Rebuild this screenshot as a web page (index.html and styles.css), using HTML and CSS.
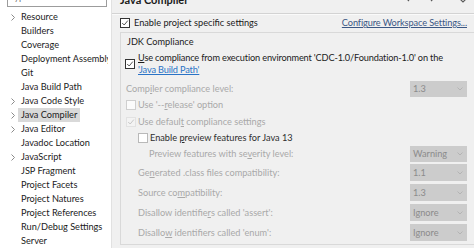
FILE: index.html
```html
<!DOCTYPE html>
<html lang="en">
<head>
<meta charset="utf-8">
<title>Properties - Java Compiler</title>
<link rel="stylesheet" href="styles.css">
</head>
<body>
<div class="window">
  <aside class="nav">
    <div class="filter">type filter text</div>
    <ul class="tree">
      <li class="node"><span class="twisty"><svg viewBox="0 0 4 7" width="4" height="7"><path d="M0.5 0.5 L3.5 3.5 L0.5 6.5" fill="none" stroke="#8a8a8a" stroke-width="1"/></svg></span><span class="label">Resource</span></li>
      <li class="node"><span class="twisty"></span><span class="label">Builders</span></li>
      <li class="node"><span class="twisty"></span><span class="label">Coverage</span></li>
      <li class="node"><span class="twisty"></span><span class="label">Deployment Assembly</span></li>
      <li class="node"><span class="twisty"></span><span class="label">Git</span></li>
      <li class="node"><span class="twisty"></span><span class="label">Java Build Path</span></li>
      <li class="node"><span class="twisty"><svg viewBox="0 0 4 7" width="4" height="7"><path d="M0.5 0.5 L3.5 3.5 L0.5 6.5" fill="none" stroke="#8a8a8a" stroke-width="1"/></svg></span><span class="label">Java Code Style</span></li>
      <li class="node selected"><span class="twisty"><svg viewBox="0 0 4 7" width="4" height="7"><path d="M0.5 0.5 L3.5 3.5 L0.5 6.5" fill="none" stroke="#8a8a8a" stroke-width="1"/></svg></span><span class="label">Java Compiler</span></li>
      <li class="node"><span class="twisty"><svg viewBox="0 0 4 7" width="4" height="7"><path d="M0.5 0.5 L3.5 3.5 L0.5 6.5" fill="none" stroke="#8a8a8a" stroke-width="1"/></svg></span><span class="label">Java Editor</span></li>
      <li class="node"><span class="twisty"></span><span class="label">Javadoc Location</span></li>
      <li class="node"><span class="twisty"><svg viewBox="0 0 4 7" width="4" height="7"><path d="M0.5 0.5 L3.5 3.5 L0.5 6.5" fill="none" stroke="#8a8a8a" stroke-width="1"/></svg></span><span class="label">JavaScript</span></li>
      <li class="node"><span class="twisty"></span><span class="label">JSP Fragment</span></li>
      <li class="node"><span class="twisty"></span><span class="label">Project Facets</span></li>
      <li class="node"><span class="twisty"></span><span class="label">Project Natures</span></li>
      <li class="node"><span class="twisty"></span><span class="label">Project References</span></li>
      <li class="node"><span class="twisty"></span><span class="label">Run/Debug Settings</span></li>
      <li class="node"><span class="twisty"></span><span class="label">Server</span></li>
    </ul>
  </aside>

  <main class="page">
    <header class="page-head">
      <h1 class="page-title">Java Compiler</h1>
      <div class="toolbar">
        <svg class="tb-back" viewBox="0 0 10 10" width="10" height="10"><path d="M9 5 H2 M5 2 L2 5 L5 8" fill="none" stroke="#5a5a5a" stroke-width="1.2"/></svg>
        <svg class="tb-fwd" viewBox="0 0 10 10" width="10" height="10"><path d="M1 5 H8 M5 2 L8 5 L5 8" fill="none" stroke="#5a5a5a" stroke-width="1.2"/></svg>
        <svg class="tb-menu" viewBox="0 0 8 10" width="8" height="10"><path d="M1 6 L4 9 L7 6" fill="none" stroke="#5a5a5a" stroke-width="1.2"/></svg>
      </div>
    </header>

    <div class="enable-row">
      <span class="cb cb-on"><svg viewBox="0 0 10 10" width="8" height="8"><path d="M1.5 5 L4 7.5 L8.5 2" fill="none" stroke="#2b2b2b" stroke-width="1"/></svg></span>
      <span class="enable-label">Enable pro<u>j</u>ect specific settings</span>
      <a class="ws-link" href="#">Configure Workspace Settings...</a>
    </div>

    <section class="group">
      <div class="group-title">JDK Compliance</div>

      <div class="row env-row">
        <span class="cb cb-on"><svg viewBox="0 0 10 10" width="8" height="8"><path d="M1.5 5 L4 7.5 L8.5 2" fill="none" stroke="#2b2b2b" stroke-width="1"/></svg></span>
        <p class="env-text"><u>U</u>se compliance from execution environment 'CDC-1.0/Foundation-1.0' on the<br><a class="path-link" href="#">'Java Build Path'</a></p>
      </div>

      <div class="row level-row">
        <span class="dim">Comp<u>i</u>ler compliance level:</span>
        <span class="combo">1.3<svg viewBox="0 0 6 4" width="6" height="4"><path d="M0.5 0.5 L3 3 L5.5 0.5" fill="none" stroke="#b4b4b4" stroke-width="1"/></svg></span>
      </div>

      <div class="row release-row">
        <span class="cb cb-off-dim"></span>
        <span class="dim cb-text">Use '--<u>r</u>elease' option</span>
      </div>

      <div class="row default-row">
        <span class="cb cb-on-dim"><svg viewBox="0 0 10 10" width="8" height="8"><path d="M1.5 5 L4 7.5 L8.5 2" fill="none" stroke="#bdbdbd" stroke-width="1"/></svg></span>
        <span class="dim cb-text">Use defaul<u>t</u> compliance settings</span>
      </div>

      <div class="row preview-row">
        <span class="cb cb-off"></span>
        <span class="cb-text preview-text">Enable <u>p</u>review features for Java 13</span>
      </div>

      <div class="row severity-row">
        <span class="dim">Preview features with se<u>v</u>erity level:</span>
        <span class="combo">Warning<svg viewBox="0 0 6 4" width="6" height="4"><path d="M0.5 0.5 L3 3 L5.5 0.5" fill="none" stroke="#b4b4b4" stroke-width="1"/></svg></span>
      </div>

      <div class="row opt-row first-opt">
        <span class="dim">Ge<u>n</u>erated .class files compatibility:</span>
        <span class="combo">1.1<svg viewBox="0 0 6 4" width="6" height="4"><path d="M0.5 0.5 L3 3 L5.5 0.5" fill="none" stroke="#b4b4b4" stroke-width="1"/></svg></span>
      </div>

      <div class="row opt-row">
        <span class="dim">Source co<u>m</u>patibility:</span>
        <span class="combo">1.3<svg viewBox="0 0 6 4" width="6" height="4"><path d="M0.5 0.5 L3 3 L5.5 0.5" fill="none" stroke="#b4b4b4" stroke-width="1"/></svg></span>
      </div>

      <div class="row opt-row">
        <span class="dim">Disallow identifie<u>r</u>s called 'assert':</span>
        <span class="combo">Ignore<svg viewBox="0 0 6 4" width="6" height="4"><path d="M0.5 0.5 L3 3 L5.5 0.5" fill="none" stroke="#b4b4b4" stroke-width="1"/></svg></span>
      </div>

      <div class="row opt-row">
        <span class="dim">Disallo<u>w</u> identifiers called 'enum':</span>
        <span class="combo">Ignore<svg viewBox="0 0 6 4" width="6" height="4"><path d="M0.5 0.5 L3 3 L5.5 0.5" fill="none" stroke="#b4b4b4" stroke-width="1"/></svg></span>
      </div>
    </section>
  </main>
</div>
</body>
</html>
```

FILE: styles.css
```css
* {
  box-sizing: border-box;
  margin: 0;
  padding: 0;
}

html,
body {
  width: 474px;
  height: 248px;
  overflow: hidden;
}

body {
  font-family: Lato, "Open Sans", sans-serif;
  font-size: 9.2px;
  color: #1b1b1b;
  background: #f0f0f0;
}

u {
  text-decoration: underline;
  text-decoration-thickness: 1px;
  text-underline-offset: 1px;
}

.window {
  display: flex;
  height: 248px;
}

/* ---------- left navigation ---------- */
.nav {
  width: 112px;
  flex: none;
  background: #ffffff;
  border-right: 1px solid #e1e1e1;
  overflow: hidden;
}

.filter {
  margin: -13px 0 0 7px;
  width: 100px;
  height: 20px;
  border: 1px solid #9c9c9c;
  color: #6f6f6f;
  padding-left: 3px;
  line-height: 18px;
  white-space: nowrap;
}

.tree {
  list-style: none;
  margin-top: 3px;
  width: 108px;
  overflow: hidden;
}

.node {
  display: flex;
  align-items: center;
  height: 14px;
  line-height: 14px;
  white-space: nowrap;
}

.twisty {
  width: 18px;
  flex: none;
  display: flex;
  align-items: center;
  padding-left: 11px;
}

.twisty svg {
  display: block;
}

.label {
  padding: 0 3px;
  height: 14px;
}

.node.selected .label {
  background: #d9d9d9;
}

/* ---------- right page ---------- */
.page {
  flex: 1;
  min-width: 0;
  padding-left: 8px;
  overflow: hidden;
  display: flex;
  flex-direction: column;
}

.page-head {
  display: flex;
  height: 21px;
  margin: -7px 0 0 -8px;
  padding-left: 8px;
  border-bottom: 1px solid #d3d3d3;
  box-shadow: 0 1px 0 #fafafa;
}

.page-title {
  font-size: 11px;
  font-weight: 700;
  line-height: 14px;
  color: #1b1b1b;
}

.toolbar {
  margin-left: auto;
  padding: 0 7px 0 0;
  display: flex;
  align-items: flex-start;
}

.toolbar svg {
  display: block;
}

.tb-fwd {
  margin-left: 12px;
}

.tb-menu {
  margin-left: 23px;
}

.enable-row {
  display: flex;
  align-items: center;
  height: 18px;
  line-height: 12px;
  padding-right: 7px;
}

.enable-label {
  margin-left: 4px;
}

.ws-link {
  margin-left: auto;
  color: #3b5784;
  letter-spacing: -0.1px;
  text-decoration: underline;
  text-decoration-thickness: 1px;
  text-underline-offset: 1px;
}

/* checkboxes */
.cb {
  width: 10px;
  height: 10px;
  flex: none;
  display: flex;
  align-items: center;
  justify-content: center;
}

.cb svg {
  display: block;
}

.cb-on {
  background: #ffffff;
  border: 1px solid #333333;
}

.cb-off {
  background: #ffffff;
  border: 1px solid #b9b9b9;
}

.cb-off-dim {
  background: #fbfbfb;
  border: 1px solid #cfcfcf;
}

.cb-on-dim {
  background: #f3f3f3;
  border: 1px solid #e2e2e2;
}

/* group */
.group {
  flex: none;
  border: 1px solid #d9d9d9;
  border-right: none;
  padding: 3px 7px 3px 0;
  line-height: 12px;
}

.group-title {
  height: 12px;
  padding-left: 6px;
}

.row {
  display: flex;
  align-items: center;
}

.dim {
  color: #a9a9a9;
}

.env-row {
  margin-top: 4px;
  padding-left: 4px;
}

.env-text {
  margin-left: 3px;
  line-height: 12px;
  letter-spacing: -0.15px;
}

.path-link {
  color: #2a73c6;
  text-decoration: underline;
  text-decoration-thickness: 1px;
  text-underline-offset: 1px;
}

.level-row {
  margin-top: 5px;
  height: 16px;
  padding-left: 5px;
}

.release-row {
  height: 16px;
  padding-left: 5px;
}

.default-row {
  height: 17px;
  padding-left: 5px;
}

.cb-text {
  margin-left: 2px;
}

.preview-row {
  height: 16px;
  padding-left: 17px;
}

.preview-text {
  color: #2e2e2e;
}

.severity-row {
  height: 16px;
  padding-left: 28px;
}

.opt-row {
  height: 17px;
  margin-top: 3px;
  padding-left: 17px;
}

.opt-row.first-opt {
  margin-top: 2px;
}

.combo {
  margin-left: auto;
  width: 57px;
  height: 16px;
  align-self: center;
  background: #cccccc;
  color: #8b8b8b;
  display: flex;
  align-items: center;
  justify-content: space-between;
  padding: 0 4px 0 3px;
}

.opt-row .combo {
  height: 17px;
}

.combo svg {
  display: block;
}
```
